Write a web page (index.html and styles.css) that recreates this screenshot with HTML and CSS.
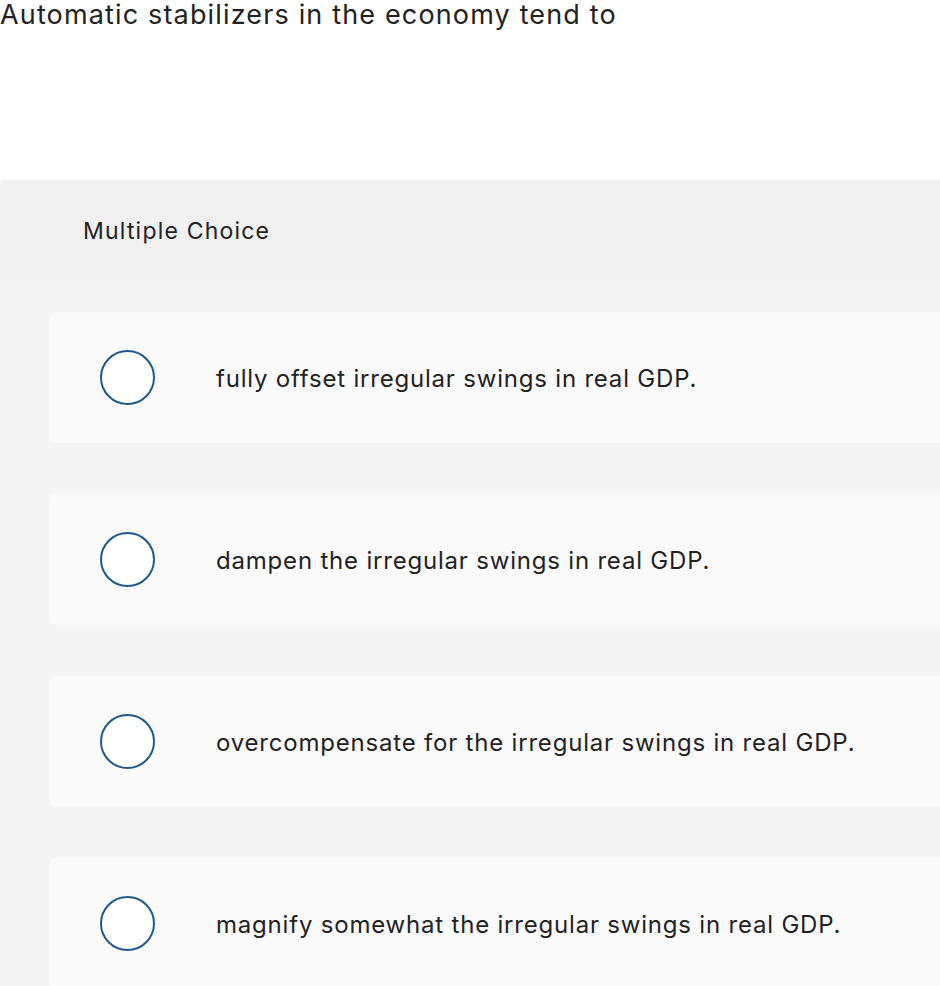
FILE: index.html
```html
<!DOCTYPE html>
<html>
<head>
<meta charset="utf-8">
<link rel="stylesheet" href="styles.css">
</head>
<body>
<div class="question">Automatic stabilizers in the economy tend to</div>
<div class="panel">
  <div class="panel-head">Multiple Choice</div>
  <div class="choices">
    <div class="choice"><span class="radio"></span><span class="label">fully offset irregular swings in real GDP.</span></div>
    <div class="choice"><span class="radio"></span><span class="label">dampen the irregular swings in real GDP.</span></div>
    <div class="choice"><span class="radio"></span><span class="label">overcompensate for the irregular swings in real GDP.</span></div>
    <div class="choice"><span class="radio"></span><span class="label">magnify somewhat the irregular swings in real GDP.</span></div>
  </div>
</div>
</body>
</html>
```
FILE: styles.css
```css
html, body {
  margin: 0;
  padding: 0;
  background: #ffffff;
  overflow: hidden;
}
body {
  font-family: "Inter", "Liberation Sans", sans-serif;
  color: #222222;
  width: 940px;
  height: 986px;
}
.question {
  font-size: 27px;
  line-height: 30px;
  height: 180px;
  letter-spacing: 1.15px;
}
.panel {
  background: #f5f5f5;
  border-top-left-radius: 5px;
  overflow: hidden;
}
.panel-head {
  background: #f0f0f0;
  height: 100px;
  padding-left: 83px;
  display: flex;
  align-items: center;
  font-size: 23px;
  letter-spacing: 1.2px;
  padding-top: 2px;
  box-sizing: border-box;
}
.choices {
  display: flex;
  flex-direction: column;
  gap: 51px;
  padding: 32px 0 0 50px;
}
.choice {
  background: #fafafa;
  border-radius: 5px 0 0 5px;
  height: 131px;
  display: flex;
  align-items: center;
  padding-left: 50px;
}
.radio {
  width: 51px;
  height: 51px;
  border: 2px solid #1f5a8d;
  border-radius: 50%;
  background: #ffffff;
  flex: none;
}
.label {
  margin-left: 61px;
  font-size: 24px;
  letter-spacing: 0.8px;
  padding-top: 2px;
}
```
